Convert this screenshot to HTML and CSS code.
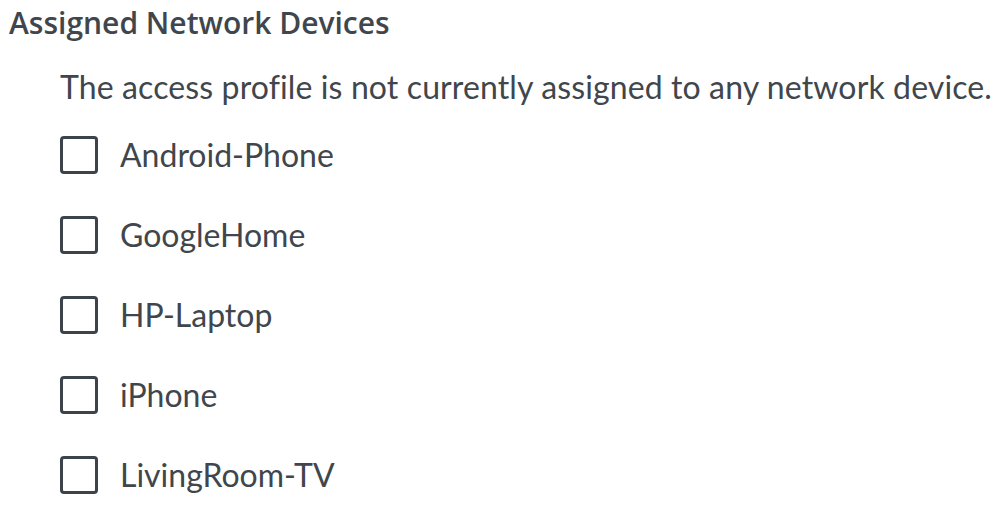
FILE: index.html
```html
<!DOCTYPE html>
<html lang="en">

<head>
    <meta charset="utf-8">
    <title>Assigned Network Devices</title>
    <link rel="stylesheet" href="styles.css">
</head>

<body>
    <section class="devices">
        <h2 class="devices_title">Assigned Network Devices</h2>

        <div class="devices_body">
            <p class="devices_info">The access profile is not currently assigned to any network device.</p>

            <ul class="device_list">
                <li class="device"><label><input type="checkbox"><span class="box"></span>Android-Phone</label></li>
                <li class="device"><label><input type="checkbox"><span class="box"></span>GoogleHome</label></li>
                <li class="device"><label><input type="checkbox"><span class="box"></span>HP-Laptop</label></li>
                <li class="device"><label><input type="checkbox"><span class="box"></span>iPhone</label></li>
                <li class="device"><label><input type="checkbox"><span class="box"></span>LivingRoom-TV</label></li>
            </ul>
        </div>
    </section>
</body></html>
```

FILE: styles.css
```css
body {
    margin: 0;
    background-color: #ffffff;
    color: #40464c;
    font-family: Lato, "Noto Sans", sans-serif;
}

.devices {
    padding: 4.5px 0 0 9px;
}

.devices_title {
    margin: 0;
    font-family: "Open Sans", Lato, sans-serif;
    font-size: 30px;
    font-weight: 600;
    line-height: 36px;
}

.devices_body {
    padding-left: 51px;
}

.devices_info {
    margin: 26px 0 0 0;
    font-size: 32px;
    line-height: 40px;
    letter-spacing: 0.12px;
    white-space: nowrap;
}

.device_list {
    list-style: none;
    margin: 29.5px 0 0 0;
    padding: 0;
}

.device {
    height: 80px;
}

.device label {
    display: flex;
    align-items: center;
    gap: 22px;
    height: 38px;
    font-size: 32px;
    line-height: 38px;
}

.device input {
    display: none;
}

.box {
    box-sizing: border-box;
    width: 38px;
    height: 38px;
    border: 3.5px solid #3c434a;
    border-radius: 4px;
}
```
